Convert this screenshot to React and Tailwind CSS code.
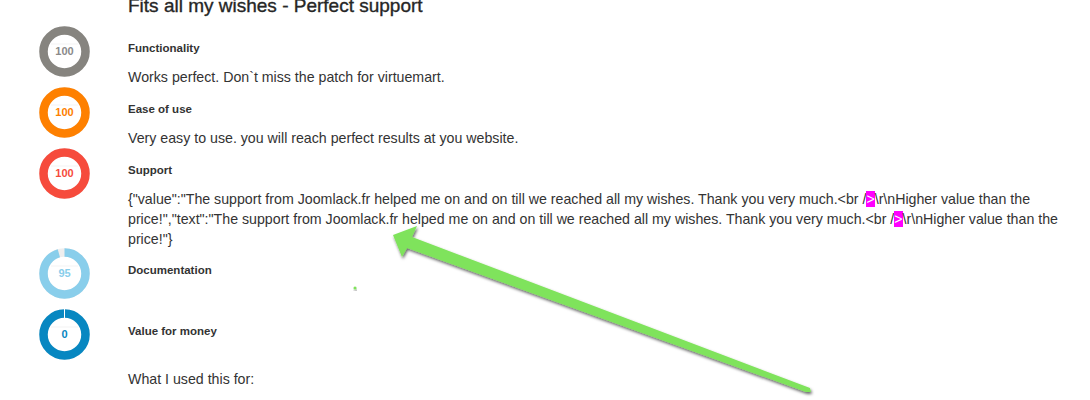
const ratings = [
  {
    label: 'Functionality',
    value: 100,
    color: '#86847f',
    text: 'Works perfect. Don`t miss the patch for virtuemart.',
  },
  {
    label: 'Ease of use',
    value: 100,
    color: '#fe8000',
    text: 'Very easy to use. you will reach perfect results at you website.',
  },
  {
    label: 'Support',
    value: 100,
    color: '#f64b3c',
    support: true,
  },
  { label: 'Documentation', value: 95, color: '#89ceeb' },
  { label: 'Value for money', value: 0, color: '#0787c1', full: true },
];

function Ring({ value, color, full }) {
  const r = 21;
  const c = 2 * Math.PI * r;
  const pct = full ? 100 : value;
  return (
    <div className="relative w-[51px] h-[51px]">
      <svg width="51" height="51" viewBox="0 0 51 51">
        <circle cx="25.5" cy="25.5" r={r} fill="none" stroke="#eeeeee" strokeWidth="8.5" />
        <circle
          cx="25.5"
          cy="25.5"
          r={r}
          fill="none"
          stroke={color}
          strokeWidth="8.5"
          strokeDasharray={`${(c * pct) / 100} ${c}`}
          transform="rotate(-90 25.5 25.5)"
        />
        {full && <rect x="25" y="0" width="1" height="9" fill="#ffffff" />}
        <line x1="12" y1="18" x2="39" y2="18" stroke="#f3f3f3" strokeWidth="1" />
      </svg>
      <div
        className="absolute inset-0 flex items-center justify-center text-[11px] font-bold"
        style={{ color: color === '#86847f' ? '#8a8a8a' : color }}
      >
        {value}
      </div>
    </div>
  );
}

function Hi() {
  return <span className="bg-[#ff00ff] text-white">&gt;</span>;
}

function SupportText() {
  const part = 'The support from Joomlack.fr helped me on and on till we reached all my wishes. Thank you very much.<br /';
  return (
    <p className="mt-[10px] text-[14.2px] leading-5 text-[#333]">
      {'{"value":"'}
      {part}
      <Hi />
      {'\\r\\nHigher value than the price!","text":"'}
      {part}
      <Hi />
      {'\\r\\nHigher value than the price!"}'}
    </p>
  );
}

export default function App() {
  return (
    <div
      className="relative w-[1090px] h-[400px] overflow-hidden bg-white text-[#333]"
      style={{ fontFamily: '"Liberation Sans", Arial, sans-serif' }}
    >
      <h2 className="pl-[128px] -mt-[7px] text-[19px] leading-[26px] text-[#262626] [-webkit-text-stroke:0.35px_#262626]">
        Fits all my wishes - Perfect support
      </h2>

      <div className="mt-[7px]">
        {ratings.map((r) => (
          <div key={r.label} className="flex items-start">
            <div className="shrink-0 ml-[39px] mr-[38px] mb-[10px]">
              <Ring value={r.value} color={r.color} full={r.full} />
            </div>
            <div className="flex-1 pt-[13px] pr-[12px] -mb-px">
              <div className="text-[11.5px] leading-[18px] font-bold text-[#333]">{r.label}</div>
              {r.text && (
                <p className="mt-[10px] text-[14.2px] leading-5 text-[#333]">{r.text}</p>
              )}
              {r.support && <SupportText />}
            </div>
          </div>
        ))}
      </div>

      <p className="pl-[128px] -mt-px text-[14.2px] leading-5 text-[#333]">What I used this for:</p>

      <svg
        className="absolute inset-0 pointer-events-none"
        width="1090"
        height="400"
        viewBox="0 0 1090 400"
      >
        <defs>
          <filter id="sh" x="-10%" y="-10%" width="120%" height="130%">
            <feDropShadow dx="1" dy="2" stdDeviation="1.5" floodColor="#000" floodOpacity="0.6" />
          </filter>
        </defs>
        <polygon
          points="393,235 417,226 412,237 810,388 811,392 806,392 407,248 402,257"
          fill="#7fe35b"
          filter="url(#sh)"
        />
        <circle cx="355" cy="288" r="1.5" fill="#7fe35b" filter="url(#sh)" />
      </svg>
    </div>
  );
}
